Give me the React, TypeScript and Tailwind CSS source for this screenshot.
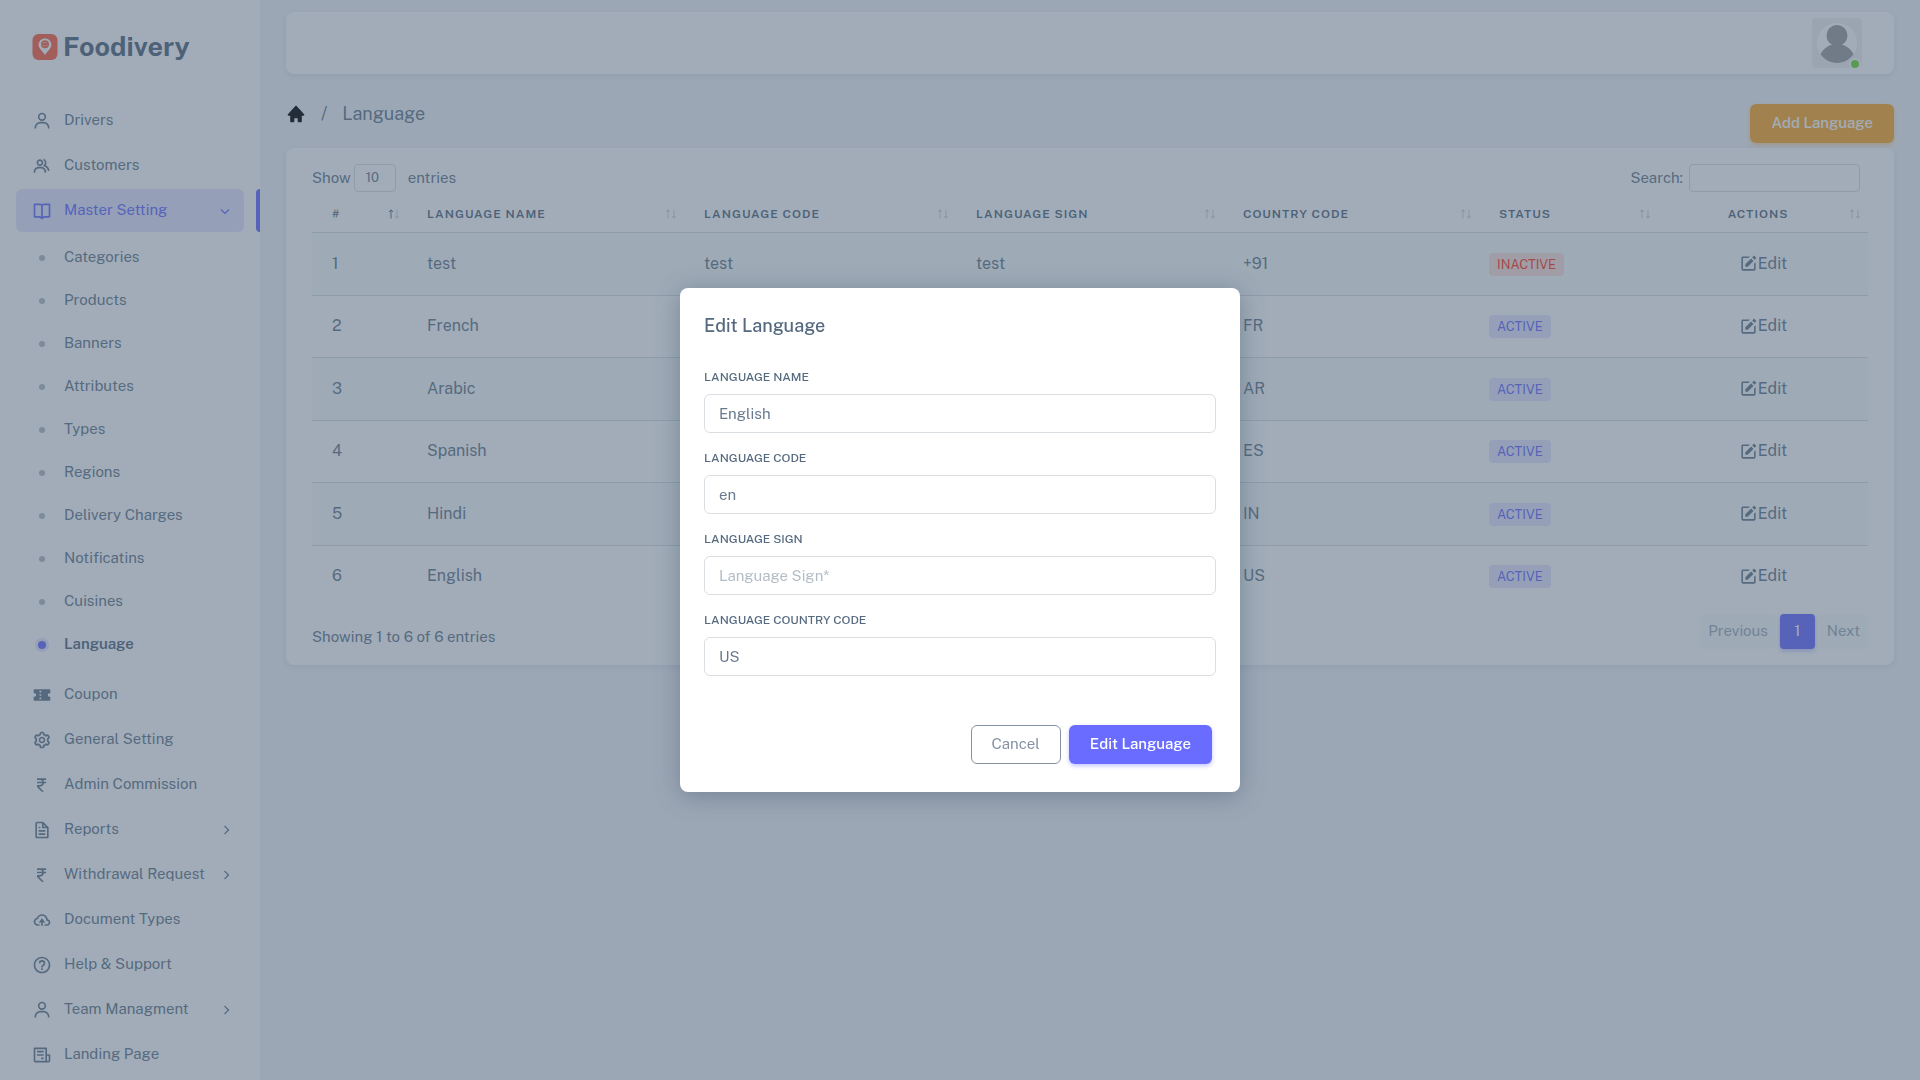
import type { ReactNode } from "react";
import {
  BiBookOpen,
  BiCloudUpload,
  BiCog,
  BiFile,
  BiGroup,
  BiHelpCircle,
  BiRupee,
  BiSolidCoupon,
  BiSolidEdit,
  BiSolidHome,
  BiUser,
} from "react-icons/bi";

const NewsIcon = ({ className }: { className?: string }) => (
  <svg viewBox="0 0 24 24" className={className} fill="none" stroke="currentColor" strokeWidth="2" strokeLinejoin="round">
    <path d="M17 20V4H3v15a1 1 0 0 0 1 1h15.500a1.500 1.500 0 0 0 1.500-1.500V12h-4" />
    <path d="M6 8h8M6 12h8M11 16h3" />
  </svg>
);

const Chevron = ({ down }: { down?: boolean }) => (
  <svg viewBox="0 0 10 10" className="-mr-1 ml-auto size-2.5 overflow-visible" fill="none" stroke="currentColor" strokeWidth="1.2">
    <path d={down ? "M-1 3.500l4 4 4-4" : "M2.500 1l4 4-4 4"} />
  </svg>
);

const topItems = [
  { label: "Drivers", icon: BiUser },
  { label: "Customers", icon: BiGroup },
];

const masterItems = [
  "Categories",
  "Products",
  "Banners",
  "Attributes",
  "Types",
  "Regions",
  "Delivery Charges",
  "Notificatins",
  "Cuisines",
  "Language",
];

const bottomItems = [
  { label: "Coupon", icon: BiSolidCoupon },
  { label: "General Setting", icon: BiCog },
  { label: "Admin Commission", icon: BiRupee },
  { label: "Reports", icon: BiFile, more: true },
  { label: "Withdrawal Request", icon: BiRupee, more: true },
  { label: "Document Types", icon: BiCloudUpload },
  { label: "Help & Support", icon: BiHelpCircle },
  { label: "Team Managment", icon: BiUser, more: true },
  { label: "Landing Page", icon: NewsIcon },
];

const columns = [
  { label: "#", width: "w-[95px]" },
  { label: "Language Name", width: "w-[277px]" },
  { label: "Language Code", width: "w-[272px]" },
  { label: "Language Sign", width: "w-[267px]" },
  { label: "Country Code", width: "w-[256px]" },
  { label: "Status", width: "w-[179px]" },
  { label: "Actions", width: "w-[210px]" },
];

const rows = [
  { name: "test", code: "test", sign: "test", country: "+91", active: false },
  { name: "French", code: "", sign: "", country: "FR", active: true },
  { name: "Arabic", code: "", sign: "", country: "AR", active: true },
  { name: "Spanish", code: "", sign: "", country: "ES", active: true },
  { name: "Hindi", code: "", sign: "", country: "IN", active: true },
  { name: "English", code: "", sign: "", country: "US", active: true },
];

const fields = [
  { id: "name", label: "Language Name", value: "English" },
  { id: "code", label: "Language Code", value: "en" },
  { id: "sign", label: "Language Sign", value: "" },
  { id: "country", label: "Language Country Code", value: "US" },
];

const Logo = () => (
  <svg viewBox="0 0 26 28" className="h-7 w-[26px]">
    <rect x="0.5" y="1" width="25" height="26" rx="6" fill="#ff6243" />
    <path
      d="M13 5.500c-3.600 0-6.400 2.700-6.400 6.200 0 4 4.300 6.600 6.400 10.300 2.100-3.700 6.400-6.300 6.400-10.300 0-3.500-2.800-6.200-6.400-6.200z"
      fill="#fff"
    />
    <circle cx="13" cy="11.300" r="4" fill="#ff6243" />
    <path d="M10.200 11.800c1.500 1.500 4.100 1.500 5.600 0M11 9.700l4-.5" stroke="#fff" strokeWidth="0.700" opacity="0.700" fill="none" />
  </svg>
);

const Avatar = () => (
  <div className="relative">
    <svg viewBox="0 0 50 50" className="size-[50px] rounded">
      <rect width="50" height="50" fill="#f0f0f0" />
      <circle cx="25" cy="25" r="20" fill="#fff" />
      <circle cx="25" cy="17.500" r="10.500" fill="#9c9c9c" />
      <path d="M8.500 36.300C11.500 30 18 26 25 26s13.500 4 16.500 10.300C38 41.500 32 45 25 45S12 41.500 8.500 36.300z" fill="#9c9c9c" />
    </svg>
    <span className="absolute right-px -bottom-0.5 size-3 rounded-full border-2 border-white bg-[#71dd37]" />
  </div>
);

type NavItemProps = { label: string; icon: (props: { className?: string }) => ReactNode; more?: boolean };

const NavItem = ({ label, icon: Icon, more }: NavItemProps) => (
  <li className="px-4">
    <a href="#" className="flex h-[43px] items-center rounded-md px-4">
      <Icon className="mr-3 size-5 shrink-0" />
      {label}
      {more && <Chevron />}
    </a>
  </li>
);

const SortArrows = ({ active }: { active?: boolean }) => (
  <svg viewBox="0 0 10 10" className="ml-3 size-2.5 shrink-0" fill="none" stroke="currentColor">
    <path d="M2 9.500V1M0 3L2 0.800 4 3" opacity={active ? 1 : 0.3} />
    <path d="M8 0.500V9M6 7L8 9.200 10 7" opacity="0.300" />
  </svg>
);

const Card = ({ className, children }: { className: string; children: ReactNode }) => (
  <div className={`rounded-lg bg-white shadow-[0_2px_6px_rgba(67,89,113,0.12)] ${className}`}>{children}</div>
);

const Sidebar = () => (
  <aside className="w-[260px] shrink-0 overflow-hidden bg-white">
    <div className="flex h-[93px] items-center gap-1 pl-8">
      <Logo />
      <span className="pl-px text-[27px] font-bold text-[#566a7f]">Foodivery</span>
    </div>
    <ul className="flex flex-col gap-0.5 pt-1.5">
      {topItems.map((item) => (
        <NavItem key={item.label} {...item} />
      ))}
      <li>
        <div className="flex justify-between pl-4">
          <a
            href="#"
            className="flex h-[43px] w-[228px] items-center rounded-md bg-[#696cff]/16 px-4 text-[#696cff]"
          >
            <BiBookOpen className="mr-3 size-5" />
            Master Setting
            <Chevron down />
          </a>
          <span className="w-1 rounded-l bg-[#696cff]" />
        </div>
        <ul className="pt-1 pb-[5px]">
          {masterItems.map((label) => {
            const current = label === "Language";
            return (
              <li key={label}>
                <a
                  href="#"
                  className={`flex h-[43px] items-center px-8 ${current ? "font-semibold text-[#566a7f]" : ""}`}
                >
                  <span className="mr-3 flex w-5 justify-center">
                    {current ? (
                      <span className="size-3.5 rounded-full border-3 border-[#e7e7ff] bg-[#696cff]" />
                    ) : (
                      <span className="size-1.5 rounded-full bg-[#b4bdc6]" />
                    )}
                  </span>
                  {label}
                </a>
              </li>
            );
          })}
        </ul>
      </li>
      {bottomItems.map((item) => (
        <NavItem key={item.label} {...item} />
      ))}
    </ul>
  </aside>
);

const LanguageTable = () => (
  <Card className="px-[26px] pt-4 pb-4">
    <div className="flex items-center justify-between">
      <label className="flex items-center">
        Show
        <select className="mr-3 ml-[3px] h-7 w-[42px] appearance-none rounded border border-[#d9dee3] pl-[11px] text-[13px]">
          <option>10</option>
        </select>
        entries
      </label>
      <label className="mr-2 flex items-center gap-1.5">
        Search:
        <input type="search" className="h-7 w-[171px] rounded border border-[#d9dee3] px-2" />
      </label>
    </div>
    <table className="w-full table-fixed">
      <thead>
        <tr className="border-b border-[#d9dee3]">
          {columns.map((col) => (
            <th key={col.label} className={`h-10 pt-1 pr-2 pl-5 ${col.width}`}>
              <div className="flex items-center justify-between text-xs font-semibold tracking-[1px] text-[#566a7f] uppercase">
                <span className={col.label === "Actions" ? "flex-1 text-center" : ""}>{col.label}</span>
                <SortArrows active={col.label === "#"} />
              </div>
            </th>
          ))}
        </tr>
      </thead>
      <tbody className="text-base">
        {rows.map((row, i) => (
          <tr key={row.name} className="h-[62px] border-b border-[#d9dee3] last:border-0 odd:h-[63px] odd:bg-[#f9fafb]">
            <td className="px-5">{i + 1}</td>
            <td className="px-5">{row.name}</td>
            <td className="px-5">{row.code}</td>
            <td className="px-5">{row.sign}</td>
            <td className="px-5">{row.country}</td>
            <td className="px-2.5">
              {row.active ? (
                <span className="inline-block rounded bg-[#e7e7ff] px-2 text-[13px] leading-[23px] text-[#696cff]">
                  ACTIVE
                </span>
              ) : (
                <span className="inline-block rounded bg-[#ffe0db] px-2 text-[13px] leading-[23px] text-[#ff3e1d]">
                  INACTIVE
                </span>
              )}
            </td>
            <td>
              <a href="#" className="flex items-center justify-center">
                <BiSolidEdit className="size-[19px]" />
                Edit
              </a>
            </td>
          </tr>
        ))}
      </tbody>
    </table>
    <div className="flex items-start justify-between pt-[7px]">
      <p className="pt-3">Showing 1 to 6 of 6 entries</p>
      <div className="flex gap-1">
        <button className="h-[35px] rounded bg-[#f9fafb] px-2 text-[#a1acb8]">Previous</button>
        <button className="h-[35px] w-[35px] rounded bg-[#696cff] text-white shadow-[0_2px_4px_rgba(105,108,255,0.4)]">
          1
        </button>
        <button className="h-[35px] rounded bg-[#f9fafb] px-2 text-[#a1acb8]">Next</button>
      </div>
    </div>
  </Card>
);

const EditModal = () => (
  <div className="fixed inset-0 flex items-center justify-center bg-[#435971]/50">
    <form
      role="dialog"
      aria-label="Edit Language"
      className="w-[560px] rounded-lg bg-white px-6 pt-6 pb-7 shadow-[0_4px_24px_rgba(67,89,113,0.45)]"
    >
      <h5 className="text-lg leading-7 font-medium text-[#566a7f]">Edit Language</h5>
      <div className="flex flex-col gap-4 pt-7">
        {fields.map((field) => (
          <div key={field.id}>
            <label htmlFor={field.id} className="mb-2 block text-xs leading-[18px] font-medium text-[#566a7f] uppercase">
              {field.label}
            </label>
            <input
              id={field.id}
              type="text"
              defaultValue={field.value}
              placeholder={`${field.label}*`}
              className="block h-[39px] w-full rounded-md border border-[#d9dee3] px-3.5 placeholder:text-[#b4bdc6]"
            />
          </div>
        ))}
      </div>
      <div className="flex justify-end gap-2 pt-[49px] pr-1">
        <button type="button" className="h-[39px] rounded-md border border-[#8592a3] px-5 text-[#8592a3]">
          Cancel
        </button>
        <button
          type="submit"
          className="h-[39px] rounded-md bg-[#696cff] px-[21px] font-medium text-white shadow-[0_2px_4px_rgba(105,108,255,0.4)]"
        >
          Edit Language
        </button>
      </div>
    </form>
  </div>
);

const App = () => {
  return (
    <div className="flex h-screen overflow-hidden bg-[#f5f5f9] font-['Public_Sans',Inter,sans-serif] text-[15px] text-[#697a8d]">
      <Sidebar />
      <main className="flex-1 px-[26px] pt-3">
        <Card className="flex h-[62px] items-center justify-end pr-8">
          <Avatar />
        </Card>
        <div className="flex items-start justify-between pt-[30px] pb-[5px]">
          <nav className="flex items-center gap-[15px] text-lg leading-5">
            <a href="#" aria-label="Home" className="text-black">
              <BiSolidHome className="size-5" />
            </a>
            <span>/</span>
            <span>Language</span>
          </nav>
          <button className="h-[39px] rounded-md bg-[#ffab2d] px-[21px] font-medium text-white shadow-[0_2px_4px_rgba(255,171,0,0.4)]">
            Add Language
          </button>
        </div>
        <LanguageTable />
      </main>
      <EditModal />
    </div>
  );
};

export default App;
